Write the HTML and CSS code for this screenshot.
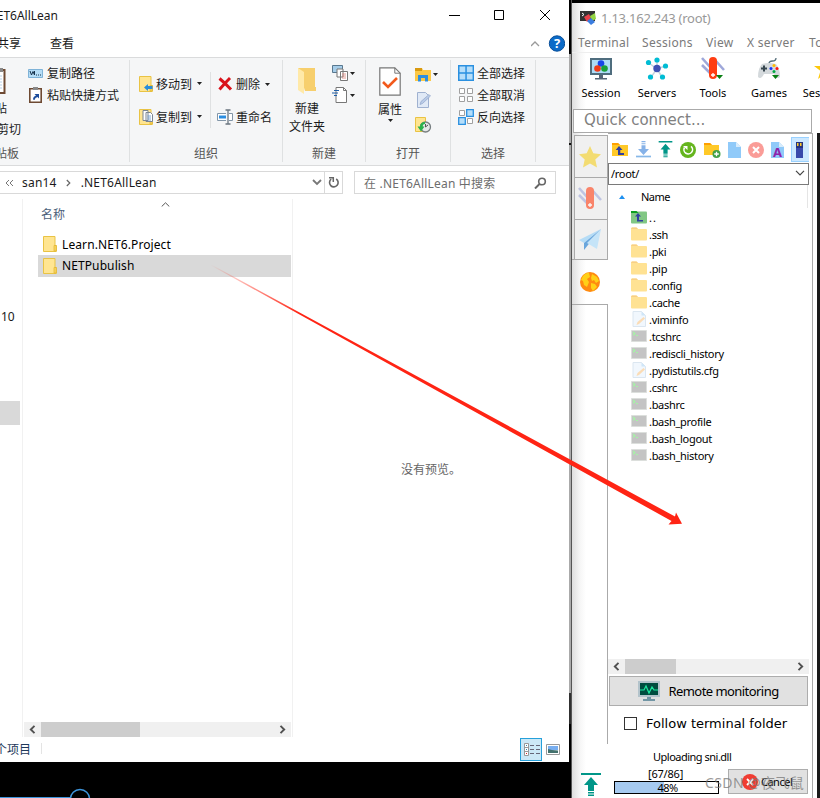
FILE: index.html
```
<!DOCTYPE html>
<html lang="zh-CN">
  <head>
    <meta charset="UTF-8" />
    <meta name="viewport" content="width=device-width, initial-scale=1.0" />
    <title>.NET6AllLean</title>
    <link rel="stylesheet" href="styles.css">
  </head>
  <body>
    <!-- Shared icons -->
    <svg class="defs" width="0" height="0">
      <symbol id="caret" viewBox="0 0 5 3"><path d="M0 0h5L2.500 3z" fill="#222" /></symbol>
      <symbol id="yfolder" viewBox="0 0 14 16">
        <path d="M.5.5h11.500v9h1.300v6H.5z" fill="#ffe591" stroke="#e9c344" />
        <path d="M11 15V9.500h2.300V15z" fill="#fbd45f" stroke="#e0b52f" stroke-width=".7" />
      </symbol>
      <symbol id="dir" viewBox="0 0 16 14">
        <path d="M0 1.500Q0 .5 1 .5h4.500l1.500 1.500h8Q16 2 16 3v9.500q0 1-1 1H1q-1 0-1-1z" fill="#ffe293" />
        <path d="M1 .5h4.500l1.500 1.500H0z" fill="#f8cf85" />
      </symbol>
      <symbol id="doc" viewBox="0 0 16 16">
        <path d="M2 .5h8.500l4 4v11H2z" fill="#f1f7fd" stroke="#dbe6f0" />
        <path d="M10.500.5v4h4z" fill="#cfe6f8" />
        <path d="M5.500 14l1-3 6-5 1.500 1.500-6 5.500z" fill="#fbdcb5" />
      </symbol>
      <symbol id="sh" viewBox="0 0 16 12">
        <path d="M.5.5h15v11H.5z" fill="#c4c4c4" stroke="#dcdfdc" />
        <path d="M2 2l2 1.700-2 1.600M5 5.500h2" fill="none" stroke="#a4f5a4" stroke-width="1.200" />
      </symbol>
      <symbol id="knife" viewBox="0 0 24 24">
        <g stroke="#9fa8da" stroke-width="2.600" fill="none">
          <path d="M1 1l8 9M1 8l11 11M14 3l9 10" />
        </g>
        <rect x="8" y="0" width="8" height="22" rx="4" fill="#ff3d12" />
        <path d="M12 16v4M10 18h4" stroke="#fff" stroke-width="1.300" />
      </symbol>
      <symbol id="left" viewBox="0 0 7 9"><path d="M5.500.8L1.800 4.500l3.700 3.700" fill="none" stroke="#505050" stroke-width="1.900" /></symbol>
      <symbol id="right" viewBox="0 0 7 9"><path d="M1.500.8l3.700 3.700-3.700 3.700" fill="none" stroke="#505050" stroke-width="1.900" /></symbol>
      <symbol id="upload" viewBox="0 0 20 24">
        <path d="M0 0h20v2H0zM10 4l7 8h-4v6H7v-6H3zM7 19h6v1.500H7zM7 21.500h6V23H7z" fill="#009688" />
      </symbol>
    </svg>

    <div class="desktop">
      <!-- File explorer -->
      <div class="explorer">
        <div class="titlebar">
          <span class="title">.NET6AllLean</span>
          <svg class="winbtns" width="104" height="12" viewBox="0 0 104 12">
            <path d="M0 6.500h11M45.500 1.500h9v9h-9zM91 1l10 10M101 1L91 11" fill="none" stroke="#000" />
          </svg>
        </div>
        <div class="tabs">
          <span class="tab-share">共享</span>
          <span class="tab-view">查看</span>
          <svg class="help" width="34" height="18" viewBox="0 0 34 18">
            <path d="M0 12l4-4 4 4" fill="none" stroke="#9a9a9a" stroke-width="1.300" />
            <circle cx="26" cy="9.500" r="7.700" fill="#0b6bc8" stroke="#0a509a" />
            <text x="26" y="14" text-anchor="middle" fill="#fff" font-size="13" font-weight="bold">?</text>
          </svg>
        </div>

        <div class="ribbon">
          <div class="group">
            <div class="group-body">
              <div class="paste">
                <svg width="22" height="28" viewBox="0 0 22 28">
                  <path d="M-14 2h18.500v23H-14z" fill="#fff" stroke="#6e4a33" stroke-width="2" />
                  <path d="M-4 8h6M-4 11h6M-4 14h6M-4 17h6M-4 20h6" stroke="#b7d2ea" />
                  <path d="M0 0h3v4H0z" fill="#888" />
                </svg>
                <span class="end paste-label">粘贴</span>
                <span class="end cut-label">剪切</span>
              </div>
              <div class="rows clip-rows">
                <div class="cmd">
                  <svg width="16" height="16" viewBox="0 0 16 16">
                    <path d="M.5 4.500h14v8H.5z" fill="#b5dcf5" stroke="#7fb3d8" />
                    <path d="M2 6l1.500 4L5 6.500 6.500 10V6M8 10h1M10 10h1M12 10h1" fill="none" stroke="#16324c" />
                  </svg>
                  <span>复制路径</span>
                </div>
                <div class="cmd">
                  <svg width="16" height="16" viewBox="0 0 16 16">
                    <path d="M1.800 1.800h11.400v13.400H1.800z" fill="#fff" stroke="#6e4a33" stroke-width="1.600" />
                    <path d="M5 0h5v3H5z" fill="#888" />
                    <path d="M5 12.500q0-3 3-4L6.500 7H11v4.500L9.500 10Q7 10.500 6.500 13z" fill="#1d4d9c" />
                  </svg>
                  <span>粘贴快捷方式</span>
                </div>
              </div>
            </div>
            <div class="group-label clip-label"><span class="end">剪贴板</span></div>
          </div>

          <div class="group">
            <div class="group-body organise">
              <div class="rows tall">
                <div class="cmd">
                  <svg width="14" height="16" viewBox="0 0 14 16"><use href="#yfolder" /><path d="M5 11.500l4-3.500v2h4.500v3H9v2z" fill="#2a8dd8" /></svg>
                  <span>移动到</span><svg class="caret" width="5" height="3"><use href="#caret" /></svg>
                </div>
                <div class="cmd">
                  <svg width="14" height="16" viewBox="0 0 14 16"><use href="#yfolder" />
                    <path d="M4 1.500h5v10H4zM7 3.500h4.500l2 2v7H7z" fill="#fff" stroke="#7b8593" />
                    <path d="M8.500 7h3.500M8.500 9h3.500M8.500 11h3.500" stroke="#5c93cf" stroke-width=".8" />
                  </svg>
                  <span>复制到</span><svg class="caret" width="5" height="3"><use href="#caret" /></svg>
                </div>
              </div>
              <div class="rows tall split">
                <div class="cmd">
                  <svg width="16" height="16" viewBox="0 0 16 16"><path d="M2.500 2.500Q8 7 14 13.500M13 2Q8 7 2.500 13.500" fill="none" stroke="#d9141c" stroke-width="3" /></svg>
                  <span>删除</span><svg class="caret" width="5" height="3"><use href="#caret" /></svg>
                </div>
                <div class="cmd">
                  <svg width="16" height="16" viewBox="0 0 16 16">
                    <path d="M9 4.500H.5v7H9M12 4.500h3.500v7H12" fill="#fff" stroke="#8296a8" />
                    <path d="M2 6.500h7v3H2z" fill="#2a8de0" />
                    <path d="M8.500 1h5M11 1v14M8.500 15h5" fill="none" stroke="#6a7680" stroke-width="1.300" />
                  </svg>
                  <span>重命名</span>
                </div>
              </div>
            </div>
            <div class="group-label">组织</div>
          </div>

          <div class="group">
            <div class="group-body new-body">
              <div class="big">
                <svg width="20" height="28" viewBox="0 0 20 28">
                  <path d="M1 1h17v19h1v4H8z" fill="#f7cf6d" /><path d="M1 1l6 4v22l-6-4z" fill="#ffe9a8" />
                </svg>
                <span>新建</span><span>文件夹</span>
              </div>
              <div class="rows">
                <div class="cmd">
                  <svg width="17" height="16" viewBox="0 0 17 16">
                    <path d="M.5.500h10v7H.5z" fill="#a6cde9" stroke="#59788f" /><path d="M5 4h6v8H5zM8.500 6.500h7v9h-7z" fill="#fff" stroke="#777" />
                    <path d="M10 9h4M10 11h4M10 13h4" stroke="#db8076" stroke-width=".8" />
                  </svg>
                  <svg class="caret" width="5" height="3"><use href="#caret" /></svg>
                </div>
                <div class="cmd">
                  <svg width="17" height="16" viewBox="0 0 17 16">
                    <path d="M4 .500h7.500l3 3v12H4z" fill="#fff" stroke="#777" /><path d="M11.500.500v3h3" fill="none" stroke="#777" />
                    <path d="M2 3.500h5M0 6h6M2 8.500h3" stroke="#1f5fa8" stroke-width="1.200" />
                  </svg>
                  <svg class="caret" width="5" height="3"><use href="#caret" /></svg>
                </div>
              </div>
            </div>
            <div class="group-label">新建</div>
          </div>

          <div class="group">
            <div class="group-body open-body">
              <div class="big">
                <svg width="22" height="29" viewBox="0 0 22 29">
                  <path d="M.8.800h15l5.400 5.400v22H.8z" fill="#fff" stroke="#777" stroke-width="1.200" />
                  <path d="M15.800.800v5.400h5.400" fill="none" stroke="#777" />
                  <path d="M4 15l5 5 9-9" fill="none" stroke="#f25a1c" stroke-width="2.600" />
                </svg>
                <span>属性</span>
                <svg class="caret" width="5" height="3"><use href="#caret" /></svg>
              </div>
              <div class="rows mid">
                <div class="cmd">
                  <svg width="17" height="16" viewBox="0 0 17 16">
                    <path d="M0 1h7l1 2h8v11H0z" fill="#fcc846" /><path d="M0 1h7v3H0z" fill="#d99a10" />
                    <path d="M3 14.500V8h10v6.500h-3V11H6v3.500z" fill="#2e8fe0" />
                  </svg>
                  <svg class="caret" width="5" height="3"><use href="#caret" /></svg>
                </div>
                <div class="cmd">
                  <svg width="17" height="16" viewBox="0 0 17 16">
                    <path d="M2.500.500h8l3 3v12h-11z" fill="#e0e9f6" stroke="#9fb1d0" />
                    <path d="M5 12.500l1-3 8-7 1.500 1.500-8 7.500z" fill="#b9cbe8" stroke="#91a5c9" stroke-width=".7" />
                  </svg>
                </div>
                <div class="cmd">
                  <svg width="17" height="16" viewBox="0 0 17 16">
                    <path d="M.5.500h10v14H.5z" fill="#ffe591" stroke="#e9c344" />
                    <circle cx="10.500" cy="10" r="5" fill="#e5e8e8" stroke="#777e80" stroke-width="1.300" />
                    <path d="M10.500 10V7M10.500 10l2.500-2" stroke="#555" />
                    <path d="M10 5Q5 5 5 9.500H2.500L6 14.500 9.500 9.500H7.800Q7.500 7 10 7z" fill="#2bb24c" />
                  </svg>
                </div>
              </div>
            </div>
            <div class="group-label">打开</div>
          </div>

          <div class="group">
            <div class="group-body">
              <div class="rows select-rows">
                <div class="cmd">
                  <svg width="16" height="16" viewBox="0 0 16 16"><path d="M0 0h16v16H0z" fill="#2a90e0" /><path d="M1.500 1.500h5.800v5.800H1.500zM8.800 1.500h5.800v5.800H8.800zM1.500 8.800h5.800v5.800H1.500zM8.800 8.800h5.800v5.800H8.800z" fill="#b5defa" /></svg>
                  <span>全部选择</span>
                </div>
                <div class="cmd">
                  <svg width="16" height="16" viewBox="0 0 16 16"><path d="M1.500 1.500h5v5h-5zM9.500 1.500h5v5h-5zM1.500 9.500h5v5h-5zM9.500 9.500h5v5h-5z" fill="#fff" stroke="#a0a0a0" /></svg>
                  <span>全部取消</span>
                </div>
                <div class="cmd">
                  <svg width="16" height="16" viewBox="0 0 16 16"><path d="M1.500 1.500h5v5h-5zM9.500 9.500h5v5h-5z" fill="#fff" stroke="#a0a0a0" /><path d="M8.700.700h6.600v6.600H8.700zM.7 8.700h6.600v6.600H.7z" fill="#b5defa" stroke="#2a90e0" stroke-width="1.300" /></svg>
                  <span>反向选择</span>
                </div>
              </div>
            </div>
            <div class="group-label">选择</div>
          </div>
        </div>

        <div class="address">
          <div class="path">
            <svg width="9" height="8" viewBox="0 0 9 8"><path d="M4 1L1 4l3 3M8 1L5 4l3 3" fill="none" stroke="#777" /></svg>
            <span class="crumb">san14</span>
            <svg width="5" height="8" viewBox="0 0 5 8"><path d="M.8 1l3 3-3 3" fill="none" stroke="#666" stroke-width="1.200" /></svg>
            <span class="crumb">.NET6AllLean</span>
            <svg class="drop" width="10" height="7" viewBox="0 0 10 7"><path d="M1 1l4 4 4-4" fill="none" stroke="#777" stroke-width="1.800" /></svg>
          </div>
          <div class="refresh">
            <svg width="12" height="13" viewBox="0 0 12 13"><path d="M8.200 3A4.300 4.300 0 1 1 3.200 3.200" fill="none" stroke="#666" stroke-width="1.600" /><path d="M1 1.700h4.300V6" fill="none" stroke="#666" stroke-width="1.500" /></svg>
          </div>
          <div class="search">
            <span>在 .NET6AllLean 中搜索</span>
            <svg width="13" height="12" viewBox="0 0 13 12"><circle cx="8" cy="4.500" r="3.300" fill="none" stroke="#666" stroke-width="1.600" /><path d="M5.500 7L1 11.500" stroke="#666" stroke-width="2" /></svg>
          </div>
        </div>

        <div class="content">
          <div class="nav">
            <span>10</span>
            <div class="nav-sel"></div>
          </div>
          <div class="files">
            <svg class="sort" width="9" height="5" viewBox="0 0 9 5"><path d="M.7 4.500L4.500.8l3.800 3.700" fill="none" stroke="#555" /></svg>
            <div class="col-name">名称</div>
            <div class="file"><svg width="14" height="16"><use href="#yfolder" /></svg><span>Learn.NET6.Project</span></div>
            <div class="file selected"><svg width="14" height="16"><use href="#yfolder" /></svg><span>NETPubulish</span></div>
            <div class="hscroll">
              <svg width="7" height="9"><use href="#left" /></svg>
              <div class="thumb"></div>
              <svg width="7" height="9"><use href="#right" /></svg>
            </div>
          </div>
          <div class="preview">没有预览。</div>
        </div>

        <div class="status">
          <span class="end count">2 个项目</span>
          <div class="views">
            <div class="view-on">
              <svg width="16" height="13" viewBox="0 0 16 13">
                <path d="M.5.500h4v12h-4zM.5 4.500h4M.5 8.500h4" fill="#fff" stroke="#999" />
                <path d="M6 2.500h4M12 2.500h4M6 6.500h4M12 6.500h4M6 10.500h4M12 10.500h4" stroke="#667" />
                <path d="M2 10h1v1H2z" fill="#d22" />
                <path d="M2 2h1v1H2zM2 6h1v1H2z" fill="#38a" />
              </svg>
            </div>
            <svg width="14" height="11" viewBox="0 0 14 11">
              <path d="M.5.500h13v10H.5z" fill="#fff" stroke="#999" /><path d="M2 2h10v4H2z" fill="#78aef0" /><path d="M2 5l4 1 6 .5V9H2z" fill="#43716d" />
            </svg>
          </div>
        </div>
      </div>

      <div class="strip"></div>

      <!-- Terminal client -->
      <div class="term">
        <div class="term-title">
          <svg width="17" height="16" viewBox="0 0 17 16">
            <path d="M0 1h15v10H0z" fill="#333" /><path d="M2 3l2 1.500L2 6" fill="none" stroke="#fff" />
            <path d="M4 7l5-3 2 4-4 4z" fill="#e8404a" /><path d="M10 6l5-3 1 6-4 2z" fill="#93d543" /><path d="M7 11l4-3 4 4-4 3z" fill="#3b7de0" />
          </svg>
          <span>1.13.162.243 (root)</span>
        </div>
        <div class="menu">
          <span>Terminal</span><span>Sessions</span><span class="m-view">View</span><span class="m-x">X server</span><span>Tools</span>
        </div>
        <div class="tools">
          <div class="tool">
            <svg width="24" height="24" viewBox="0 0 24 24">
              <path d="M1 1h22v17H1z" fill="#4f6d7e" /><path d="M3 3h18v13H3z" fill="#addcf7" />
              <circle cx="12" cy="6.500" r="3.300" fill="#1746e8" /><circle cx="8.500" cy="11.500" r="3.300" fill="#ee3a18" /><circle cx="15.500" cy="11.500" r="3.300" fill="#18a038" />
              <path d="M10 18h4v3h4v1.500H6V21h4z" fill="#567" />
            </svg>
            <span>Session</span>
          </div>
          <div class="tool">
            <svg width="24" height="24" viewBox="0 0 24 24">
              <path d="M12 12V3M12 12L4 6M12 12l8-3M12 12l-6 8M12 12l5 8" stroke="#c5d3dd" stroke-width="1.500" />
              <g fill="#00bcd4"><circle cx="12" cy="3" r="2.600" /><circle cx="3.500" cy="5.500" r="2.600" /><circle cx="20.500" cy="9" r="2.600" /><circle cx="5.500" cy="20" r="2.600" /><circle cx="17.500" cy="20" r="2.600" /></g>
              <circle cx="12" cy="11.500" r="3.700" fill="#3f51b5" />
            </svg>
            <span>Servers</span>
          </div>
          <div class="tool">
            <svg width="24" height="24" viewBox="0 0 24 24"><use href="#knife" /><path d="M15 18h7l-3.500 4z" fill="#087f13" /></svg>
            <span>Tools</span>
          </div>
          <div class="tool">
            <svg width="24" height="24" viewBox="0 0 24 24">
              <path d="M12 7q0-3 3.500-3T19 1" fill="none" stroke="#546e7a" stroke-width="1.300" />
              <path d="M5 7q7-2 14 0 4 4 4 13-3 3-6-3H7q-3 6-6 3Q1 11 5 7z" fill="#d4d9dc" />
              <path d="M7 8.500v6M4 11.500h6" stroke="#37474f" stroke-width="2" />
              <circle cx="17" cy="8.500" r="1.500" fill="#fb0" /><circle cx="14" cy="11.500" r="1.500" fill="#13f" /><circle cx="20" cy="11.500" r="1.500" fill="#f11" /><circle cx="17" cy="14.500" r="1.500" fill="#0a4" />
              <path d="M15 18h7l-3.500 4z" fill="#087f13" />
            </svg>
            <span>Games</span>
          </div>
          <div class="tool">
            <svg width="24" height="24" viewBox="0 0 24 24"><path d="M12 1l3 8h8l-6.500 5 2.500 8-7-5-7 5 2.500-8L1 9h8z" fill="#fdc80a" /></svg>
            <span>Sessions</span>
          </div>
        </div>
        <div class="quick">Quick connect...</div>

        <div class="work">
          <div class="side">
            <div class="stab"><svg width="24" height="24" viewBox="0 0 24 24"><path d="M12 1l3.300 7.300 7.700.9-5.700 5.400L19 22.500 12 18.600l-7 3.900 1.700-7.900L1 9.200l7.700-.9z" fill="#f3dc72" /></svg></div>
            <div class="stab"><svg class="faded" width="24" height="24"><use href="#knife" /></svg></div>
            <div class="stab send"><svg width="24" height="24" viewBox="0 0 24 24"><path d="M23 1L1 12l5 3z" fill="#b5dcf6" /><path d="M23 1L6 15v7l4-5z" fill="#6aa6dc" /><path d="M23 1L9 15l10 6z" fill="#c5e4f8" /></svg></div>
            <div class="globe"><svg width="20" height="20" viewBox="0 0 20 20"><circle cx="10" cy="10" r="10" fill="#ff8a10" /><path d="M3 4q4-4 6-3l1 4-3 2 2 3-2 5-3-2-1-4-2-1zM12 2l5 3 2 4-3 2-2-3-2 1-1-3zM11 11l4 1 2 3-4 4-2-3z" fill="#ffd017" /></svg></div>
            <div class="side-rest"></div>
            <svg class="up-big" width="20" height="24"><use href="#upload" /></svg>
          </div>

          <div class="panel">
            <div class="browser">
              <div class="icons">
                <svg width="17" height="16" viewBox="0 0 17 16"><path d="M0 1h6l2 2h8v11H0z" fill="#ffc928" /><path d="M0 1h6l2 2H0z" fill="#ffa000" /><path d="M7 4l3.500 4H8.300v3H12v2H6V8H3.700z" fill="#303f9f" /></svg>
                <svg width="15" height="17" viewBox="0 0 15 17"><path d="M0 15.500h15" stroke="#87b8e8" stroke-width="1.700" /><path d="M5.500 0h4v1.200h-4zM5.500 2.200h4v1h-4zM5.500 4.200h4V8H13l-5.500 6L2 8h3.500z" fill="#86b2e8" /></svg>
                <svg width="15" height="17" viewBox="0 0 20 24"><use href="#upload" /></svg>
                <svg width="16" height="16" viewBox="0 0 16 16"><circle cx="8" cy="8" r="8" fill="#65b51e" /><path d="M4.500 5.500a4.300 4.300 0 1 0 6.500-1.200" fill="none" stroke="#fff" stroke-width="1.600" /><path d="M3 4h4.500v4z" fill="#fff" /></svg>
                <svg width="17" height="16" viewBox="0 0 17 16"><path d="M0 1h6l2 2h7v10H0z" fill="#ffc928" /><path d="M0 1h6l2 2H0z" fill="#ffa000" /><circle cx="12.500" cy="12" r="4" fill="#43a047" /><path d="M12.500 9.700v4.600M10.200 12h4.600" stroke="#fff" stroke-width="1.300" /></svg>
                <svg width="13" height="16" viewBox="0 0 13 16"><path d="M0 0h8l5 5v11H0z" fill="#90caf9" /><path d="M8 0v5h5z" fill="#d8ecfc" /></svg>
                <svg width="16" height="16" viewBox="0 0 16 16"><circle cx="8" cy="8" r="8" fill="#fa9c97" /><path d="M5 5l6 6M11 5l-6 6" stroke="#fff" stroke-width="2" /></svg>
                <svg width="13" height="16" viewBox="0 0 13 16"><path d="M0 0h8l5 5v11H0z" fill="#90caf9" /><path d="M8 0v5h5z" fill="#d8ecfc" /><text x="6.500" y="14.500" text-anchor="middle" font-size="13" font-weight="bold" fill="#8e24aa">A</text></svg>
                <div class="icon-on"><svg width="7" height="16" viewBox="0 0 7 16"><path d="M0 0h7v16H0z" fill="#3949ab" /><path d="M0 0h7v6H0z" fill="#27347e" /><path d="M1 1h1.500v3H1zM4 1h1.500v3H4z" fill="#ffc928" /></svg></div>
              </div>
              <div class="combo"><span>/root/</span><svg width="10" height="6" viewBox="0 0 10 6"><path d="M1 .800l4 4 4-4" fill="none" stroke="#444" stroke-width="1.200" /></svg></div>
              <div class="list-head"><svg width="6" height="4" viewBox="0 0 6 4"><path d="M0 4l3-4 3 4z" fill="#1e90f0" /></svg><span>Name</span></div>
              <div class="list">
                <div class="entry"><svg width="16" height="14"><rect y="1.500" width="16" height="12" rx="1" fill="#81c784" /><path d="M0 1h5.500l2 2H0z" fill="#0a9e20" /><path d="M7 3l3 3.500H8V10h4v1.500H6v-5H4z" fill="#303f9f" /></svg><span class="updir">..</span></div>
                <div class="entry"><svg width="16" height="14"><use href="#dir" /></svg><span>.ssh</span></div>
                <div class="entry"><svg width="16" height="14"><use href="#dir" /></svg><span>.pki</span></div>
                <div class="entry"><svg width="16" height="14"><use href="#dir" /></svg><span>.pip</span></div>
                <div class="entry"><svg width="16" height="14"><use href="#dir" /></svg><span>.config</span></div>
                <div class="entry"><svg width="16" height="14"><use href="#dir" /></svg><span>.cache</span></div>
                <div class="entry"><svg width="16" height="16"><use href="#doc" /></svg><span>.viminfo</span></div>
                <div class="entry"><svg width="16" height="12"><use href="#sh" /></svg><span>.tcshrc</span></div>
                <div class="entry"><svg width="16" height="12"><use href="#sh" /></svg><span>.rediscli_history</span></div>
                <div class="entry"><svg width="16" height="16"><use href="#doc" /></svg><span>.pydistutils.cfg</span></div>
                <div class="entry"><svg width="16" height="12"><use href="#sh" /></svg><span>.cshrc</span></div>
                <div class="entry"><svg width="16" height="12"><use href="#sh" /></svg><span>.bashrc</span></div>
                <div class="entry"><svg width="16" height="12"><use href="#sh" /></svg><span>.bash_profile</span></div>
                <div class="entry"><svg width="16" height="12"><use href="#sh" /></svg><span>.bash_logout</span></div>
                <div class="entry"><svg width="16" height="12"><use href="#sh" /></svg><span>.bash_history</span></div>
              </div>
              <div class="hscroll term-scroll">
                <svg width="7" height="9"><use href="#left" /></svg>
                <div class="thumb"></div>
                <svg width="7" height="9"><use href="#right" /></svg>
              </div>
              <div class="monitor">
                <svg width="22" height="22" viewBox="0 0 22 22"><path d="M0 1h22v16H0z" fill="#b3c3cb" /><path d="M2 3h18v12H2z" fill="#004d40" /><path d="M2 10h4l2-4 3 7 3-6 2 3h4" fill="none" stroke="#1de9a0" stroke-width="1.200" /><path d="M9 17h4v2h4v2H5v-2h4z" fill="#7296a5" /></svg>
                <span>Remote monitoring</span>
              </div>
              <div class="follow"><i class="box"></i><span>Follow terminal folder</span></div>
            </div>

            <div class="upload">
              <div class="uploading">Uploading sni.dll</div>
              <div class="up-row">
                <div class="progress">
                  <span class="files-done">[67/86]</span>
                  <div class="bar"><div class="fill" style="width: 48%"></div><span class="percent">48%</span></div>
                </div>
                <div class="cancel">
                  <svg width="16" height="16" viewBox="0 0 16 16"><circle cx="8" cy="8" r="8" fill="#f03c32" /><path d="M5 5l6 6M11 5l-6 6" stroke="#fff" stroke-width="1.800" /></svg>
                  <span>Cancel</span>
                </div>
              </div>
            </div>
          </div>
          <div class="edge"></div>
        </div>
      </div>

      <!-- Taskbar part under the explorer -->
      <svg class="ring" width="100" height="12" viewBox="0 0 100 12">
        <path d="M0 11.500h71" stroke="#3d94da" /><circle cx="80" cy="13" r="9.500" fill="none" stroke="#3d94da" stroke-width="1.500" />
      </svg>

      <!-- Drag arrow from the folder to the remote list -->
      <svg class="arrow" width="820" height="798" viewBox="0 0 820 798">
        <defs>
          <linearGradient id="fade" gradientUnits="userSpaceOnUse" x1="211" y1="264" x2="300" y2="313">
            <stop offset="0" stop-color="#ff2a18" stop-opacity="0" />
            <stop offset="1" stop-color="#ff2414" />
          </linearGradient>
        </defs>
        <path d="M211.200 264.500L675 516.500L676 512.500L682 523.800L668.500 524.500L671.500 521L211 265.400Z" fill="url(#fade)" />
      </svg>
      <div class="watermark">CSDN @夜飞鼠</div>
    </div>
  </body>
</html>
```

FILE: styles.css
```
* {
  box-sizing: border-box;
}
body {
  margin: 0;
  overflow: hidden;
  font-family: "Noto Sans", "Noto Sans CJK SC", sans-serif;
  font-size: 12px;
  color: #1a1a1a;
}
svg {
  display: block;
  flex: none;
}
span {
  white-space: nowrap;
}
.defs {
  position: absolute;
}
.desktop {
  position: relative;
  display: flex;
  width: 820px;
  height: 798px;
  background: #000;
  overflow: hidden;
}
.end {
  display: flex;
  justify-content: flex-end;
}

/* File explorer */
.explorer {
  flex: none;
  width: 569px;
  height: 762px;
  background: #fff;
  overflow: hidden;
}
.titlebar {
  display: flex;
  align-items: center;
  justify-content: space-between;
  height: 30px;
  padding-right: 16px;
}
.title {
  display: flex;
  justify-content: flex-end;
  width: 58px;
}
.tabs {
  display: flex;
  align-items: center;
  height: 27px;
  padding-bottom: 1px;
}
.tab-share {
  display: flex;
  justify-content: flex-end;
  width: 21px;
}
.tab-view {
  margin-left: 29px;
}
.help {
  margin-left: auto;
  margin-right: 4px;
}
.ribbon {
  display: grid;
  grid-template-columns: 130px 153px 83px 85px 85px;
  height: 109px;
  padding: 2px 0;
  background: #f5f6f7;
  border-top: 1px solid #dadbdc;
  border-bottom: 1px solid #dadbdc;
}
.group {
  display: flex;
  flex-direction: column;
  height: 102px;
  border-right: 1px solid #dfe1e2;
}
.group-body {
  display: flex;
  height: 84px;
  padding-top: 2px;
}
.group-label {
  height: 18px;
  padding-top: 1px;
  line-height: 18px;
  text-align: center;
  color: #555;
}
.clip-label {
  width: 19px;
}
.paste {
  width: 22px;
  padding-top: 6px;
}
.paste-label {
  width: 7px;
  height: 23px;
  line-height: 25px;
}
.cut-label {
  width: 21px;
  line-height: 22px;
}
.cmd {
  display: flex;
  align-items: center;
  gap: 3px;
  height: 22px;
}
.cmd .caret {
  margin-left: 2px;
}
.clip-rows {
  margin-left: 6px;
}
.organise {
  padding: 7px 0 0 9px;
}
.tall .cmd {
  height: 33px;
}
.split {
  height: 56px;
  margin: 5px 0 0 8px;
  padding-left: 6px;
  border-left: 1px solid #dfe1e2;
}
.split .cmd:first-child {
  height: 24px;
}
.split .cmd + .cmd {
  height: 42px;
}
.split .caret {
  margin-left: 2px;
}
.new-body {
  padding-left: 5px;
}
.big {
  display: flex;
  flex-direction: column;
  align-items: center;
  width: 38px;
  padding-top: 5px;
  line-height: 18px;
}
.big svg:first-child {
  margin-bottom: 5px;
}
.new-body .rows,
.open-body .rows {
  margin-left: 6px;
}
.new-body .cmd .caret,
.open-body .cmd .caret {
  margin-left: -2px;
}
.open-body {
  padding-left: 5px;
}
.mid .cmd {
  height: 25px;
}
.select-rows {
  margin-left: 7px;
}
.address {
  display: flex;
  height: 33px;
  padding-top: 5px;
}
.path,
.refresh,
.search {
  display: flex;
  align-items: center;
  height: 23px;
  border: 1px solid #d9d9d9;
}
.path {
  width: 325px;
  padding-left: 5px;
  border-left: 0;
  letter-spacing: 0.2px;
}
.crumb {
  margin: 0 9px 0 8px;
}
.path .crumb + svg + .crumb {
  margin-left: 10px;
}
.drop {
  margin: 0 2px 0 auto;
}
.refresh {
  width: 18px;
  padding-left: 3px;
  border-left: 0;
}
.search {
  justify-content: space-between;
  width: 202px;
  margin-left: 11px;
  padding: 0 8px 0 9px;
  color: #6d6d6d;
  letter-spacing: 0.2px;
}
.content {
  display: flex;
  height: 538px;
}
.nav {
  width: 23px;
  padding: 109px 0 0 1px;
  border-right: 1px solid #f1f1f1;
}
.nav-sel {
  width: 20px;
  height: 24px;
  margin: 76px 0 0 -1px;
  background: #d9d9d9;
}
.files {
  display: flex;
  flex-direction: column;
  width: 270px;
  padding: 3px 1px 0;
  border-right: 1px solid #f1f1f1;
}
.sort {
  margin-left: 137px;
}
.col-name {
  height: 27px;
  padding-left: 17px;
  line-height: 16px;
  color: #4c607a;
}
.file {
  display: flex;
  align-items: center;
  gap: 5px;
  height: 21px;
  margin-left: 14px;
  padding: 0 0 1px 5px;
  color: #000;
  letter-spacing: 0.1px;
}
.selected {
  height: 22px;
  background: #d9d9d9;
}
.hscroll {
  display: flex;
  align-items: center;
  height: 15px;
  margin-top: auto;
  padding: 0 5px;
  background: #f0f0f0;
}
.hscroll .thumb {
  width: 99px;
  height: 15px;
  margin: 0 auto 0 5px;
  background: #cdcdcd;
}
.preview {
  width: 276px;
  line-height: 542px;
  text-align: center;
  color: #666;
}
.status {
  display: flex;
  align-items: center;
  height: 24px;
}
.count {
  width: 31px;
  color: #1e395b;
}
.count::after {
  content: "";
  height: 11px;
  margin: 3px -11px 0 10px;
  border-right: 1px solid #e4e4e4;
}
.views {
  display: flex;
  align-items: center;
  gap: 4px;
  margin: 0 9px 0 auto;
}
.view-on {
  width: 22px;
  height: 23px;
  padding: 4px 0 0 3px;
  background: #cce8f6;
  border: 1px solid #26a0da;
}

/* Sliver of the window behind */
.strip {
  flex: none;
  width: 3px;
  background: linear-gradient(#000 54px, #aaa 54px, #aaa 143px, #111 143px, #111 145px, #aaa 145px, #aaa 693px, #303030 693px, #303030 724px, #000 724px);
  border-right: 1px solid #555;
}

/* Terminal client */
.term {
  flex: none;
  display: flex;
  flex-direction: column;
  width: 248px;
  height: 795px;
  margin-top: 3px;
  background: linear-gradient(90deg, #dedede, #f6f6f6 8px, #fff 14px);
  overflow: hidden;
}
.term-title {
  display: flex;
  align-items: center;
  gap: 4px;
  height: 29px;
  padding-left: 8px;
  color: #999;
  font-size: 13px;
  letter-spacing: -0.25px;
}
.menu {
  display: flex;
  height: 21px;
  padding-left: 6px;
  border-bottom: 1px solid #eee;
  line-height: 22px;
  color: #7a7a7a;
  letter-spacing: 0.3px;
}
.menu span {
  flex: none;
  width: 64px;
}
.menu .m-view {
  width: 41px;
}
.menu .m-x {
  width: 62px;
}
.tools {
  display: flex;
  height: 56px;
  padding: 4px 0 0 1px;
}
.tool {
  flex: none;
  display: flex;
  flex-direction: column;
  align-items: center;
  width: 56px;
  font-size: 11px;
  line-height: 23px;
  color: #000;
}
.quick {
  width: 239px;
  height: 24px;
  margin-left: 1px;
  padding-left: 10px;
  border: 1px solid #aaa;
  background: #fff;
  font-family: "DejaVu Sans", sans-serif;
  font-size: 15px;
  line-height: 21px;
  color: #808080;
}
.work {
  display: flex;
  height: 665px;
}
.side {
  display: flex;
  flex-direction: column;
  width: 36px;
  padding-top: 2px;
}
.stab {
  display: flex;
  align-items: center;
  justify-content: center;
  height: 42px;
  margin-left: 2px;
  padding-right: 2px;
  background: #f0f0f0;
  border: 1px solid #aaa;
  border-bottom: 0;
}
.stab.send {
  height: 40px;
}
.faded {
  opacity: 0.6;
}
.globe {
  display: flex;
  align-items: center;
  height: 45px;
  padding-left: 8px;
  border-top: 1px solid #aaa;
}
.side-rest {
  height: 440px;
  border-top: 1px solid #aaa;
  border-right: 1px solid #aaa;
}
.up-big {
  margin: 29px 0 0 9px;
}
.panel {
  width: 205px;
  background: #fff;
  border-right: 1px solid #aaa;
}
.browser {
  display: flex;
  flex-direction: column;
  height: 611px;
  padding-right: 3px;
  border-top: 1px solid #aaa;
}
.icons {
  display: flex;
  align-items: center;
  justify-content: space-between;
  height: 29px;
  padding: 2px 0 0 4px;
}
.icon-on {
  width: 18px;
  height: 25px;
  padding: 4px 0 0 4px;
  background: #cce8ff;
  border: 1px solid #99d1ff;
  border-right: 0;
}
.combo {
  display: flex;
  align-items: center;
  justify-content: space-between;
  height: 22px;
  padding: 0 3px 2px 2px;
  border: 1px solid #7a7a7a;
  color: #000;
  font-size: 11px;
  letter-spacing: -0.3px;
}
.list-head {
  display: flex;
  align-items: center;
  gap: 16px;
  height: 23px;
  margin-right: 1px;
  padding-left: 11px;
  border-right: 1px solid #e5e5e5;
  color: #000;
  font-size: 11px;
  letter-spacing: -0.5px;
}
.entry {
  display: flex;
  align-items: center;
  gap: 2px;
  height: 17px;
  padding-left: 23px;
  color: #000;
  font-size: 11px;
  letter-spacing: -0.3px;
}
.entry span {
  padding-top: 1px;
}
.entry .updir {
  letter-spacing: 1px;
}
.term-scroll .thumb {
  width: 51px;
}
.monitor {
  display: flex;
  align-items: center;
  justify-content: center;
  gap: 8px;
  height: 30px;
  margin: 2px 1px 0;
  border: 1px solid #adadad;
  background: #e1e1e1;
  color: #000;
  font-size: 13px;
  letter-spacing: -0.55px;
}
.follow {
  display: flex;
  align-items: center;
  gap: 9px;
  height: 38px;
  padding: 0 0 3px 16px;
  color: #000;
  font-family: "DejaVu Sans", sans-serif;
  font-size: 13px;
}
.box {
  width: 13px;
  height: 13px;
  border: 1px solid #333;
}
.upload {
  padding: 5px 4px 0 6px;
  color: #000;
  font-size: 11px;
  letter-spacing: -0.5px;
}
.uploading {
  height: 20px;
  padding-left: 39px;
  line-height: 16px;
}
.up-row {
  display: flex;
  justify-content: space-between;
}
.progress {
  width: 105px;
}
.files-done {
  display: block;
  height: 12px;
  padding-left: 34px;
  line-height: 10px;
  letter-spacing: -0.2px;
}
.bar {
  position: relative;
  height: 13px;
  border: 1px solid #000;
}
.fill {
  height: 100%;
  background: #a6caf0;
}
.percent {
  position: absolute;
  top: 0;
  left: 2px;
  right: 0;
  line-height: 12px;
  text-align: center;
}
.cancel {
  display: flex;
  align-items: center;
  gap: 3px;
  width: 80px;
  height: 25px;
  padding-left: 13px;
  background: #e1e1e1;
  border: 1px solid #adadad;
}
.edge {
  width: 7px;
  border-right: 3px solid #1a1a1a;
  background: #fff;
}

/* Overlays */
.ring {
  position: absolute;
  left: 0;
  bottom: 0;
}
.arrow {
  position: absolute;
  top: 0;
  left: 0;
}
.watermark {
  position: absolute;
  left: 705px;
  top: 773px;
  font-size: 14px;
  line-height: 19px;
  white-space: nowrap;
  letter-spacing: 0.4px;
  color: rgba(120, 120, 120, 0.75);
}
```
